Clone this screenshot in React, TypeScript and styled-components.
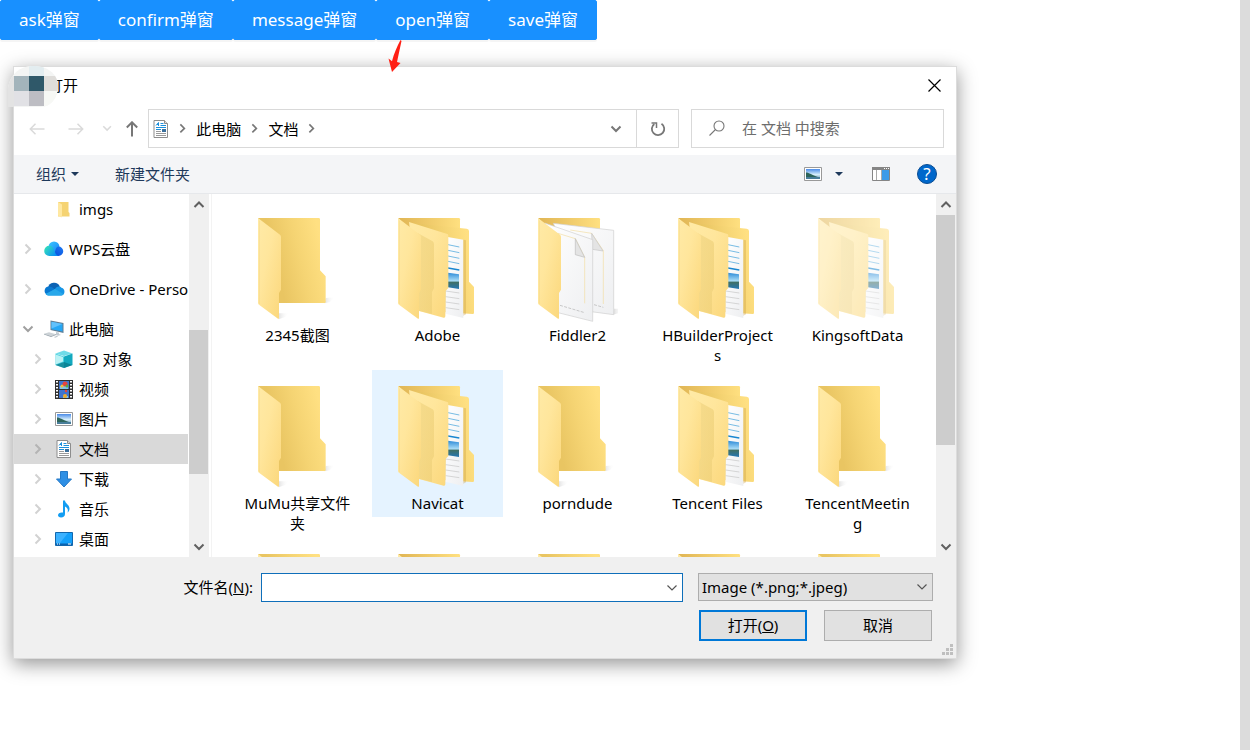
import React from "react";
import styled, { createGlobalStyle } from "styled-components";

const GlobalStyle = createGlobalStyle`
  *, *::before, *::after { box-sizing: border-box; }
  html, body, #root { height: 100%; }
  body {
    margin: 0;
    background: #fff;
    color: #000;
    font: 15px/20px "Noto Sans", "Noto Sans CJK SC", sans-serif;
  }
  button, input, select { font: inherit; color: inherit; }
  button { margin: 0; padding: 0; border: 0; background: none; cursor: pointer; }
  svg { display: block; flex: none; }
`;

const Page = styled.div`
  display: flex;
  min-height: 100%;
`;

const Main = styled.main`
  flex: 1;
  min-width: 0;
`;

const PageScrollbar = styled.div`
  width: 10px;
  background: #dcdcdc;
`;

const ButtonBar = styled.div`
  display: flex;
`;

const ActionButton = styled.button`
  height: 40px;
  padding: 0 18px;
  border: 1px solid #1890ff;
  border-radius: 2px;
  background: #1890ff;
  box-shadow: 0 2px 0 rgba(0, 0, 0, 0.04);
  color: #fff;
  font-size: 17px;
  line-height: 24px;
  white-space: nowrap;
`;

const Dialog = styled.section`
  position: relative;
  max-width: 944px;
  margin: 26px 13px 0;
  border: 1px solid #dcdcdc;
  background: #fff;
  box-shadow: 0 5px 18px rgba(0, 0, 0, 0.42);
`;

const Pointer = styled.svg`
  position: absolute;
  left: 373px;
  top: -28px;
`;

const Mosaic = styled.svg`
  position: absolute;
  left: -6px;
  top: -1px;
`;

const TitleBar = styled.header`
  display: flex;
  align-items: center;
  justify-content: space-between;
  height: 38px;
  padding: 0 12px 2px 34px;
`;

const Title = styled.h1`
  margin: 0;
  font-size: 15px;
  line-height: 20px;
  font-weight: 400;
`;

const IconButton = styled.button<{ $width: number }>`
  display: flex;
  align-items: center;
  justify-content: center;
  flex: none;
  width: ${(p) => p.$width}px;
  height: 100%;
`;

const NavRow = styled.nav`
  display: flex;
  align-items: center;
  height: 50px;
  padding: 4px 12px 7px 4px;
`;

const AddressBar = styled.div`
  display: flex;
  align-items: center;
  flex: 1;
  height: 39px;
  margin: 0 12px 0 2px;
  border: 1px solid #d9d9d9;
`;

const Crumbs = styled.div`
  display: flex;
  align-items: center;
  flex: 1;
  gap: 10px;
  padding-left: 4px;
`;

const Crumb = styled.button`
  white-space: nowrap;
`;

const RefreshCell = styled.div`
  display: flex;
  height: 100%;
  border-left: 1px solid #d9d9d9;
`;

const SearchBox = styled.label`
  display: flex;
  align-items: center;
  gap: 16px;
  width: 253px;
  height: 39px;
  padding: 0 16px 2px;
  border: 1px solid #d9d9d9;
`;

const SearchInput = styled.input`
  flex: 1;
  min-width: 0;
  padding: 0;
  border: 0;
  outline: 0;
  background: none;
  &::placeholder { color: #6d6d6d; opacity: 1; }
`;

const Toolbar = styled.div`
  display: flex;
  align-items: center;
  height: 39px;
  padding: 0 19px 0 22px;
  border-bottom: 1px solid #e6e8eb;
  background: #f4f5f7;
  color: #1e395b;
`;

const ToolButton = styled.button`
  display: flex;
  align-items: center;
  gap: 5px;
  margin-right: 36px;
`;

const ToolIcons = styled.div`
  display: flex;
  align-items: center;
  margin-left: auto;
`;

const ViewButton = styled.button`
  display: flex;
  align-items: center;
  gap: 13px;
  margin-right: 29px;
`;

const PlainButton = styled.button`
  display: flex;
`;

const HelpButton = styled.button`
  display: flex;
  align-items: center;
  justify-content: center;
  width: 20px;
  height: 20px;
  margin-left: 27px;
  border: 1px solid #0a4c93;
  border-radius: 50%;
  background: #0067cb;
  color: #fff;
  font-size: 17px;
  line-height: 18px;
`;

const Browser = styled.div`
  display: flex;
  height: 363px;
`;

const Tree = styled.ul`
  flex: none;
  width: 174px;
  margin: 0 1px 0 0;
  padding: 0;
  overflow: hidden;
  list-style: none;
`;

const TreeRow = styled.li<{ $level: number; $selected?: boolean; $spaced?: boolean }>`
  display: flex;
  align-items: center;
  height: 30px;
  margin-bottom: ${(p) => (p.$spaced ? 10 : 0)}px;
  padding-left: ${(p) => (p.$level === 1 ? 17 : 7)}px;
  background: ${(p) => (p.$selected ? "#d9d9d9" : "transparent")};
`;

const TreeToggle = styled.span`
  display: flex;
  justify-content: center;
  flex: none;
  width: 14px;
  margin-right: 8px;
`;

const TreeIcon = styled.span`
  display: flex;
  justify-content: center;
  flex: none;
  width: 22px;
  margin-right: 4px;
`;

const TreeLabel = styled.span`
  white-space: nowrap;
`;

const Scrollbar = styled.div`
  display: flex;
  flex-direction: column;
  flex: none;
  width: 20px;
  background: #f0f0f0;
`;

const ScrollButton = styled.button`
  display: flex;
  align-items: center;
  justify-content: center;
  width: 19px;
  height: 21px;
`;

const ScrollTrack = styled.div<{ $before: number }>`
  flex: 1;
  padding-top: ${(p) => p.$before}px;
`;

const ScrollThumb = styled.div<{ $length: number }>`
  width: 19px;
  height: ${(p) => p.$length}px;
  background: #cdcdcd;
`;

const Files = styled.div`
  display: grid;
  grid-template-columns: repeat(auto-fill, 131px);
  grid-auto-rows: 168px;
  column-gap: 9px;
  align-items: start;
  flex: 1;
  min-width: 0;
  margin-left: 2px;
  padding: 8px 0 0 20px;
  border-left: 1px solid #f3f3f3;
  overflow: hidden;
`;

const FileTile = styled.button<{ $hover?: boolean; $faded?: boolean }>`
  display: flex;
  flex-direction: column;
  align-items: center;
  padding: 16px 0 4px;
  background: ${(p) => (p.$hover ? "#e5f3ff" : "transparent")};
  svg { opacity: ${(p) => (p.$faded ? 0.55 : 1)}; }
`;

const FileLabel = styled.span`
  width: 113px;
  margin-top: 1px;
  line-height: 20px;
  text-align: center;
  overflow-wrap: anywhere;
`;

const Footer = styled.footer`
  position: relative;
  padding: 16px 23px 17px 0;
  background: #f0f0f0;
`;

const FieldRow = styled.div`
  display: flex;
  align-items: flex-start;
`;

const FileNameLabel = styled.label`
  width: 239px;
  margin-right: 8px;
  line-height: 29px;
  text-align: right;
`;

const Combo = styled.div`
  display: flex;
  flex: 1;
  height: 29px;
  border: 1px solid #0f6fba;
  background: #fff;
`;

const ComboInput = styled.input`
  flex: 1;
  min-width: 0;
  border: 0;
  outline: 0;
  background: none;
`;

const FilterBox = styled.div`
  display: grid;
  align-items: center;
  width: 235px;
  height: 28px;
  margin-left: 15px;
  border: 1px solid #adadad;
  background: #e1e1e1;
  > * { grid-area: 1 / 1; }
  > svg { justify-self: end; margin-right: 4px; pointer-events: none; }
`;

const FilterSelect = styled.select`
  width: 100%;
  height: 26px;
  padding: 0 20px 0 3px;
  border: 0;
  outline: 0;
  appearance: none;
  background: none;
`;

const ActionRow = styled.div`
  display: flex;
  justify-content: flex-end;
  gap: 17px;
  margin-top: 8px;
  padding-right: 1px;
`;

const DialogButton = styled.button<{ $primary?: boolean }>`
  width: 108px;
  height: 31px;
  padding-bottom: 2px;
  border: ${(p) => (p.$primary ? "2px solid #0078d7" : "1px solid #adadad")};
  background: #e1e1e1;
`;

const Grip = styled.svg`
  position: absolute;
  right: 3px;
  bottom: 3px;
`;

const DefsSvg = styled.svg`
  position: absolute;
`;

type Dir = "right" | "down" | "up" | "left";
const chevrons: Record<Dir, [number, number, string]> = {
  right: [8, 12, "M1.5 1.5 6 6l-4.500 4.500"],
  left: [8, 12, "M6 1.500 1.500 6 6 10.500"],
  down: [12, 8, "M1.500 1.500 6 6l4.500-4.500"],
  up: [12, 8, "M1.500 6 6 1.500 10.500 6"],
};

function Chevron({ dir, color, weight = 2, size = 1 }: { dir: Dir; color: string; weight?: number; size?: number }) {
  const [w, h, d] = chevrons[dir];
  return (
    <svg width={w * size} height={h * size} viewBox={`0 0 ${w} ${h}`} fill="none" stroke={color} strokeWidth={weight} aria-hidden="true">
      <path d={d} />
    </svg>
  );
}

function Caret() {
  return (
    <svg width="8" height="4" viewBox="0 0 8 4" fill="#1e395b" aria-hidden="true">
      <path d="M0 0h8L4 4z" />
    </svg>
  );
}

function Arrow({ dir, color }: { dir: "left" | "right" | "up"; color: string }) {
  const turn = { left: 0, right: 180, up: 90 }[dir];
  return (
    <svg width="16" height="16" viewBox="0 0 16 16" fill="none" stroke={color} strokeWidth={dir === "up" ? 2 : 1.5} aria-hidden="true">
      <path d="M15.500 8H1.500M6.500 2.800 1.300 8l5.200 5.200" transform={`rotate(${turn} 8 8)`} />
    </svg>
  );
}

function DocumentIcon() {
  return (
    <svg width="16" height="18" viewBox="0 0 16 18" aria-hidden="true">
      <path d="M1 .5h10.500l3 3v14H1z" fill="#fff" stroke="#8d8d8d" />
      <path d="M11.500.5v3h3" fill="#ddd" stroke="#8d8d8d" />
      <path d="M3 5.500 5.500 2.500V6M4 4.500h2M7.500 3.500h3M7.500 5.500H13M3 7.500h10M3 9.500h5" stroke="#1a8fdc" fill="none" />
      <path d="M3 11.500h5M3 13.500h10M3 15.500h10" stroke="#999" fill="none" />
      <path d="M9 9h4v3H9z" fill="#3a6f9c" />
    </svg>
  );
}

function PictureIcon() {
  return (
    <svg width="18" height="14" viewBox="0 0 18 14" aria-hidden="true">
      <defs>
        <linearGradient id="sky" x2="0" y2="1">
          <stop stopColor="#4a8be8" />
          <stop offset=".55" stopColor="#d5eefb" />
          <stop offset="1" stopColor="#6795b5" />
        </linearGradient>
      </defs>
      <path d="M.5.5h17v13H.5z" fill="#fff" stroke="#999" />
      <path d="M2 2h14v10H2z" fill="url(#sky)" />
      <path d="M2 5.500c3 0 6 2.500 12 4.500l2 1H2z" fill="#2d655b" />
      <path d="M2 10h14v2H2z" fill="#487d9a" />
    </svg>
  );
}

function SmallFolderIcon() {
  return (
    <svg width="14" height="17" viewBox="0 0 14 17" aria-hidden="true">
      <path d="M1 1h10.500v10l1 1v3.500H1z" fill="#f5d372" />
      <path d="M1 1l4 2.500v10.500l-.5 2.500L1 14.500z" fill="#ffe8a1" />
    </svg>
  );
}

function WpsIcon() {
  return (
    <svg width="20" height="16" viewBox="0 0 20 16" aria-hidden="true">
      <defs>
        <linearGradient id="wpsGreen" x2="1" y2=".6">
          <stop stopColor="#38e8b5" />
          <stop offset="1" stopColor="#0a8ff5" />
        </linearGradient>
        <linearGradient id="wpsTop" x2="1" y2="1">
          <stop stopColor="#3cc8ff" />
          <stop offset="1" stopColor="#1583f5" />
        </linearGradient>
        <linearGradient id="wpsRight" x1="1" y1="0" x2="0" y2="1">
          <stop stopColor="#1e7cf5" />
          <stop offset="1" stopColor="#0548d7" />
        </linearGradient>
      </defs>
      <circle cx="10" cy="6" r="5.500" fill="url(#wpsTop)" />
      <path d="M14.500 5.500a4.700 4.700 0 0 1 0 9.500H8c2.500-1 2.500-3 3.500-6 .6-2 1.500-3.500 3-3.500z" fill="url(#wpsRight)" />
      <path d="M5.300 4.800c3 0 4 2 5 4.700S12 14 14.500 15H5.300a5 5 0 0 1 0-10.200z" fill="url(#wpsGreen)" />
    </svg>
  );
}

function OneDriveIcon() {
  return (
    <svg width="21" height="14" viewBox="0 0 21 14" aria-hidden="true">
      <path d="M4 6a6.200 6.200 0 0 1 11.800-1.500L12 9z" fill="#0c62b4" />
      <path d="M5 4.500c2 0 4 1 6 3L4 13A4.300 4.300 0 0 1 5 4.500z" fill="#0878d1" />
      <path d="M11 7c2-3 5-3 6.500-1.200C22 7 21 13.500 17 13.500H4.500a4 4 0 0 1-2.500-1z" fill="#1796e6" />
      <path d="m11 7 8.500 5c-.8 1-1.800 1.500-3 1.500h-12a4 4 0 0 1-3-1.500z" fill="#28a8ea" />
    </svg>
  );
}

function ComputerIcon() {
  return (
    <svg width="20" height="18" viewBox="0 0 20 18" aria-hidden="true">
      <path d="m6.500.5 13 2.500v10l-13-3z" fill="#5f7d93" />
      <path d="m7.500 1.800 11 2.200v7.600l-11-2.400z" fill="#25a7f5" />
      <path d="m7.500 1.800 11 2.200-11 4.500z" fill="#60c1fc" />
      <path d="m12 12 3 .5v1.500l2 1-3 .8-4-1.300 2-.6z" fill="#c3cbd1" />
      <path d="m0 13.800 5-1.600 7 2-5 1.800z" fill="#ccd2d6" />
      <path d="m0 13.800 7 2.200 5-1.800v.8l-5 2-7-2.400zM10 17l3-.8 1 .5-3 .8z" fill="#9aa5ad" />
    </svg>
  );
}

function CubeIcon() {
  return (
    <svg width="20" height="19" viewBox="0 0 20 19" aria-hidden="true">
      <path d="m10 .5 8.500 3L10 6 1.500 3.500z" fill="#6fdbe8" />
      <path d="m1.500 3.500 8.500 3V18l-8.500-3z" fill="#4bd0de" />
      <path d="m18.500 3.500-8.500 3V18l8.500-3z" fill="#13a9bf" />
      <path d="m1.500 4.500 7.500 2.500v4.500l-7.500 3z" fill="#bbf2f5" />
      <path d="m10 12 8.500 3-8.500 3-8.500-3z" fill="#087b8b" opacity=".75" />
    </svg>
  );
}

function FilmIcon() {
  return (
    <svg width="18" height="19" viewBox="0 0 18 19" aria-hidden="true">
      <path d="M0 0h18v19H0z" fill="#303030" />
      <path d="M4 1h10v8H4zM4 10h10v8H4z" fill="#3f74cf" />
      <path d="M5 6h8v3H5zM8 16h5v2H8z" fill="#7fc6e8" />
      <circle cx="10" cy="4" r="2.500" fill="#e8443c" />
      <circle cx="7" cy="6" r="1.500" fill="#f4be3b" />
      <circle cx="12" cy="6" r="1.500" fill="#56a947" />
      <circle cx="11" cy="11" r="1.200" fill="#e8443c" />
      <circle cx="10" cy="16" r="2" fill="#eda92b" />
      <path d="M2 1v17M16 1v17" stroke="#fff" strokeWidth="2" strokeDasharray="1.500 1.500" />
    </svg>
  );
}

function DownloadIcon() {
  return (
    <svg width="18" height="17" viewBox="0 0 18 17" aria-hidden="true">
      <path d="M5.500.5h7V8h4L9 16 1.500 8h4z" fill="#2e8fe4" stroke="#2479c7" />
    </svg>
  );
}

function MusicIcon() {
  return (
    <svg width="14" height="18" viewBox="0 0 14 18" fill="#139df2" aria-hidden="true">
      <path d="M6 .5h2c0 3 4.500 4 4.500 8 0 2-1 3.500-2 4 1-3 0-4.500-2.500-6V14c0 2-1.500 3.500-4 3.500-2 0-3-1-3-2.200C1 13.500 3 12 6 12.500z" />
    </svg>
  );
}

function DesktopIcon() {
  return (
    <svg width="18" height="14" viewBox="0 0 18 14" aria-hidden="true">
      <path d="M.5.5h17v13H.5z" fill="#14a0fa" stroke="#1267ad" />
      <path d="M1 1h12L5 11H1z" fill="#3cb2ff" />
      <path d="M1 11.500h16v1.500H1z" fill="#0b62af" />
      <path d="M2 12h1M4 12h1M13 12h3" stroke="#fff" />
    </svg>
  );
}

function PaneIcon() {
  return (
    <svg width="18" height="14" viewBox="0 0 18 14" aria-hidden="true">
      <path d="M.5.5h17v13H.5z" fill="#fff" stroke="#858585" />
      <path d="M0 0h18v3H0z" fill="#858585" />
      <path d="M12 1.500h1M14 1.500h1M16 1.500h1" stroke="#fff" />
      <path d="M4.500 3v10M9.500 3v10" stroke="#aaa" />
      <path d="M10 3h7v10h-7z" fill="#3e9be8" />
    </svg>
  );
}

type FolderKind = "empty" | "files" | "papers";

function FolderDefs() {
  return (
    <DefsSvg width="0" height="0" aria-hidden="true">
      <defs>
        <linearGradient id="folderBack" x1=".1" y1=".6" x2=".95" y2=".35">
          <stop offset=".2" stopColor="#e9c562" />
          <stop offset=".6" stopColor="#f5d473" />
          <stop offset="1" stopColor="#ffe082" />
        </linearGradient>
        <linearGradient id="folderLip">
          <stop stopColor="#e0b554" />
          <stop offset="1" stopColor="#ffe080" />
        </linearGradient>
        <linearGradient id="folderFront" x2="1" y2="1">
          <stop stopColor="#ffeaa6" />
          <stop offset=".4" stopColor="#ffe69c" />
          <stop offset="1" stopColor="#fbd77b" />
        </linearGradient>
        <linearGradient id="folderInner">
          <stop stopColor="#efd27c" />
          <stop offset="1" stopColor="#ecce76" />
        </linearGradient>
        <linearGradient id="folderShade">
          <stop stopColor="#c4c4c4" />
          <stop offset="1" stopColor="#fff" stopOpacity="0" />
        </linearGradient>
        <linearGradient id="sheet" x2="1" y2="1">
          <stop stopColor="#fff" />
          <stop offset="1" stopColor="#eeeff1" />
        </linearGradient>
        <linearGradient id="photo" x2="0" y2="1">
          <stop stopColor="#2d8bd8" />
          <stop offset=".5" stopColor="#a9dcf6" />
          <stop offset=".6" stopColor="#3f7068" />
          <stop offset="1" stopColor="#2477b5" />
        </linearGradient>
      </defs>
    </DefsSvg>
  );
}

const textLines = [80, 97, 114, 130];
const greyLines = [219, 236, 252, 269];

/* Drawn on a grid three times finer than its size on the page. */
function FolderIcon({ kind }: { kind: FolderKind }) {
  return (
    <svg width="80" height="106" viewBox="0 0 240 318" aria-hidden="true">
      {kind === "empty" && (
        <>
          <path d="m200 256 3-16 27-2-14 14z" fill="url(#folderShade)" opacity=".5" />
          <path d="M0 0h182q4 0 4 4v153l17 18v77q0 3-3 3H60z" fill="url(#folderBack)" />
        </>
      )}
      {kind === "files" && (
        <>
          <path d="M0 0h182q4 0 4 4v60H60z" fill="url(#folderLip)" />
          <path d="m50 16 156 16q7 1 7 7v152l15 16v78q0 3-4 3l-150-10z" fill="url(#folderBack)" />
          <path d="m145 56 51 9v235l-54-13z" fill="url(#sheet)" />
          <path d="m196 65 8 2v222l-8 4z" fill="#c99f43" opacity=".35" />
          {textLines.map((y) => (
            <path key={y} d={`m150 ${y} 34 7`} stroke="#78bce4" strokeWidth="3" />
          ))}
          <path d="m150 150 34 6" stroke="#1886d0" strokeWidth="4" />
          <path d="m150 164 33 5v44l-33-5z" fill="url(#photo)" />
          {greyLines.map((y) => (
            <path key={y} d={`m143 ${y} 41 6`} stroke="#c4c4c4" strokeWidth="2" />
          ))}
          <path d="m33 12 115 36q3 1 3 5v157l-9 10v74q0 6-5 5l-74-20z" fill="url(#folderFront)" />
          <path d="m60 46 44 24q4 3 4 9v132l-6 11v66l-40-10z" fill="url(#folderInner)" opacity=".6" />
        </>
      )}
      {kind === "papers" && (
        <>
          <path d="m226 290 2-18 28 1-14 12z" fill="url(#folderShade)" opacity=".6" />
          <path d="M0 0h182q4 0 4 4v60H60z" fill="url(#folderLip)" />
          <path d="m46 16 181 21v253l-67-9z" fill="url(#sheet)" stroke="#cfcfcf" strokeWidth="2" />
          <path d="m97 36 64 10 35 52v160" fill="none" stroke="#f2dca2" strokeWidth="2" />
          <path d="m161 46 34 53-32-5z" fill="#e4e4e4" stroke="#c6c6c6" strokeWidth="2" />
          <path d="m20 15 144 50v245L60 284z" fill="url(#sheet)" stroke="#cfcfcf" strokeWidth="2" />
          <path d="m60 46 52 16 28 56v138" fill="none" stroke="#f2dca2" strokeWidth="2" />
          <path d="m112 62 28 56-28-8z" fill="#e4e4e4" stroke="#bcbcbc" strokeWidth="2" />
          <path d="m66 262 74 22M168 260l28 8" stroke="#b0b0b0" strokeWidth="2" strokeDasharray="9 4" />
        </>
      )}
      <path d="m62 304 1-18h30l-10 10z" fill="url(#folderShade)" opacity={kind === "empty" ? 0.5 : 0} />
      <path d="m0 0 66 50q3 3 3 7v158l-6 10v74q0 6-5 2L3 260q-3-2-3-6z" fill="url(#folderFront)" />
      <path d="M5 8v250" stroke="#efcf7b" strokeWidth="2" opacity=".5" />
    </svg>
  );
}

const actions = ["ask弹窗", "confirm弹窗", "message弹窗", "open弹窗", "save弹窗"];

type TreeItem = {
  label: string;
  level: number;
  icon: React.ReactNode;
  toggle?: Dir;
  spaced?: boolean;
  selected?: boolean;
};

const tree: TreeItem[] = [
  { label: "imgs", level: 1, icon: <SmallFolderIcon />, spaced: true },
  { label: "WPS云盘", level: 0, icon: <WpsIcon />, toggle: "right", spaced: true },
  { label: "OneDrive - Personal", level: 0, icon: <OneDriveIcon />, toggle: "right", spaced: true },
  { label: "此电脑", level: 0, icon: <ComputerIcon />, toggle: "down" },
  { label: "3D 对象", level: 1, icon: <CubeIcon />, toggle: "right" },
  { label: "视频", level: 1, icon: <FilmIcon />, toggle: "right" },
  { label: "图片", level: 1, icon: <PictureIcon />, toggle: "right" },
  { label: "文档", level: 1, icon: <DocumentIcon />, toggle: "right", selected: true },
  { label: "下载", level: 1, icon: <DownloadIcon />, toggle: "right" },
  { label: "音乐", level: 1, icon: <MusicIcon />, toggle: "right" },
  { label: "桌面", level: 1, icon: <DesktopIcon />, toggle: "right" },
];

type FileItem = { label: string; kind: FolderKind; hover?: boolean; faded?: boolean };

const files: FileItem[] = [
  { label: "2345截图", kind: "empty" },
  { label: "Adobe", kind: "files" },
  { label: "Fiddler2", kind: "papers" },
  { label: "HBuilderProjects", kind: "files" },
  { label: "KingsoftData", kind: "files", faded: true },
  { label: "MuMu共享文件夹", kind: "empty" },
  { label: "Navicat", kind: "files", hover: true },
  { label: "porndude", kind: "empty" },
  { label: "Tencent Files", kind: "files" },
  { label: "TencentMeeting", kind: "empty" },
  { label: "", kind: "empty" },
  { label: "", kind: "files" },
  { label: "", kind: "empty" },
  { label: "", kind: "files" },
  { label: "", kind: "empty" },
];

function VerticalScrollbar({ before, length }: { before: number; length: number }) {
  return (
    <Scrollbar>
      <ScrollButton aria-label="向上滚动">
        <Chevron dir="up" color="#606060" />
      </ScrollButton>
      <ScrollTrack $before={before}>
        <ScrollThumb $length={length} />
      </ScrollTrack>
      <ScrollButton aria-label="向下滚动">
        <Chevron dir="down" color="#606060" />
      </ScrollButton>
    </Scrollbar>
  );
}

export default function App() {
  return (
    <Page>
      <GlobalStyle />
      <FolderDefs />
      <Main>
        <ButtonBar>
          {actions.map((label) => (
            <ActionButton key={label}>{label}</ActionButton>
          ))}
        </ButtonBar>

        <Dialog role="dialog" aria-labelledby="dialog-title">
          <TitleBar>
            <Title id="dialog-title">打开</Title>
            <IconButton $width={20} aria-label="关闭">
              <svg width="13" height="13" viewBox="0 0 13 13" stroke="#000" strokeWidth="1.200">
                <path d="m.5.5 12 12M12.500.5l-12 12" />
              </svg>
            </IconButton>
          </TitleBar>

          <NavRow>
            <IconButton $width={38} aria-label="后退"><Arrow dir="left" color="#dadada" /></IconButton>
            <IconButton $width={40} aria-label="前进"><Arrow dir="right" color="#dadada" /></IconButton>
            <IconButton $width={22} aria-label="最近位置"><Chevron dir="down" color="#dadada" weight={1.8} size={0.85} /></IconButton>
            <IconButton $width={28} aria-label="上移"><Arrow dir="up" color="#777" /></IconButton>
            <AddressBar>
              <Crumbs>
                <DocumentIcon />
                <Chevron dir="right" color="#777" weight={1.8} size={0.9} />
                <Crumb>此电脑</Crumb>
                <Chevron dir="right" color="#777" weight={1.8} size={0.9} />
                <Crumb>文档</Crumb>
                <Chevron dir="right" color="#777" weight={1.8} size={0.9} />
              </Crumbs>
              <IconButton $width={40} aria-label="历史记录"><Chevron dir="down" color="#777" /></IconButton>
              <RefreshCell>
                <IconButton $width={41} aria-label="刷新">
                  <svg width="16" height="16" viewBox="0 0 16 16" fill="none" stroke="#777" strokeWidth="1.800">
                    <path d="M11.500 2.800a6.200 6.200 0 1 1-7.200.2" />
                    <path d="M1.500 2h5v5" strokeWidth="1.500" />
                  </svg>
                </IconButton>
              </RefreshCell>
            </AddressBar>
            <SearchBox>
              <svg width="18" height="18" viewBox="0 0 18 18" fill="none" stroke="#777" strokeWidth="1.100">
                <circle cx="11" cy="7" r="5" />
                <path d="m7.500 10.500-6 6" />
              </svg>
              <SearchInput aria-label="搜索" placeholder="在 文档 中搜索" />
            </SearchBox>
          </NavRow>

          <Toolbar>
            <ToolButton>组织<Caret /></ToolButton>
            <ToolButton>新建文件夹</ToolButton>
            <ToolIcons>
              <ViewButton aria-label="更改视图"><PictureIcon /><Caret /></ViewButton>
              <PlainButton aria-label="预览窗格"><PaneIcon /></PlainButton>
              <HelpButton aria-label="帮助">?</HelpButton>
            </ToolIcons>
          </Toolbar>

          <Browser>
            <Tree>
              {tree.map((item) => (
                <TreeRow key={item.label} $level={item.level} $selected={item.selected} $spaced={item.spaced}>
                  <TreeToggle>
                    {item.toggle && (
                      <Chevron dir={item.toggle} color={item.toggle === "down" ? "#a0a0a0" : item.selected ? "#b4b4b4" : "#d2d2d2"} />
                    )}
                  </TreeToggle>
                  <TreeIcon>{item.icon}</TreeIcon>
                  <TreeLabel>{item.label}</TreeLabel>
                </TreeRow>
              ))}
            </Tree>
            <VerticalScrollbar before={115} length={144} />
            <Files>
              {files.map((file, i) => (
                <FileTile key={i} $hover={file.hover} $faded={file.faded}>
                  <FolderIcon kind={file.kind} />
                  <FileLabel>{file.label}</FileLabel>
                </FileTile>
              ))}
            </Files>
            <VerticalScrollbar before={0} length={230} />
          </Browser>

          <Footer>
            <FieldRow>
              <FileNameLabel htmlFor="file-name">文件名(<u>N</u>):</FileNameLabel>
              <Combo>
                <ComboInput id="file-name" type="text" />
                <IconButton $width={20} aria-label="文件名列表"><Chevron dir="down" color="#555" weight={1.2} /></IconButton>
              </Combo>
              <FilterBox>
                <FilterSelect aria-label="文件类型">
                  <option>Image (*.png;*.jpeg)</option>
                </FilterSelect>
                <Chevron dir="down" color="#555" weight={1.2} />
              </FilterBox>
            </FieldRow>
            <ActionRow>
              <DialogButton $primary>打开(<u>O</u>)</DialogButton>
              <DialogButton>取消</DialogButton>
            </ActionRow>
            <Grip width="11" height="11" viewBox="0 0 11 11" fill="#bfbfbf" aria-hidden="true">
              <path d="M8 0h3v3H8zM8 4h3v3H8zM8 8h3v3H8zM4 4h3v3H4zM4 8h3v3H4zM0 8h3v3H0z" />
            </Grip>
          </Footer>

          <Mosaic width="50" height="42" viewBox="0 0 50 42" aria-hidden="true">
            <defs>
              <clipPath id="blot">
                <path d="M25 0C42 0 50 10 50 20S44 41 32 41H0V22C2 8 12 0 25 0z" />
              </clipPath>
            </defs>
            <g clipPath="url(#blot)">
              <path d="M0 0h50v42H0z" fill="#f4f5f4" />
              <path d="M0 10h6v32H0z" fill="#e3e3e3" />
              <path d="M21 0h15v10H21z" fill="#e3edf0" />
              <path d="M6 10h15v15H6z" fill="#a3b4bb" />
              <path d="M21 10h15v15H21z" fill="#2f5869" />
              <path d="M36 10h14v15H36z" fill="#dfddda" />
              <path d="M6 25h15v15H6z" fill="#e1e1e5" />
              <path d="M21 25h15v15H21z" fill="#bdbdc3" />
              <path d="M36 25h14v17H36z" fill="#f7f8f5" />
            </g>
          </Mosaic>
          <Pointer width="16" height="34" viewBox="0 0 16 34" aria-hidden="true">
            <path d="M13.500 1 14.500 2 10 23l3.500 1L5 33 1.500 19.500l3.500 2.800C7 14 10 8 13.500 1z" fill="#ff1f14" />
          </Pointer>
        </Dialog>
      </Main>
      <PageScrollbar />
    </Page>
  );
}
